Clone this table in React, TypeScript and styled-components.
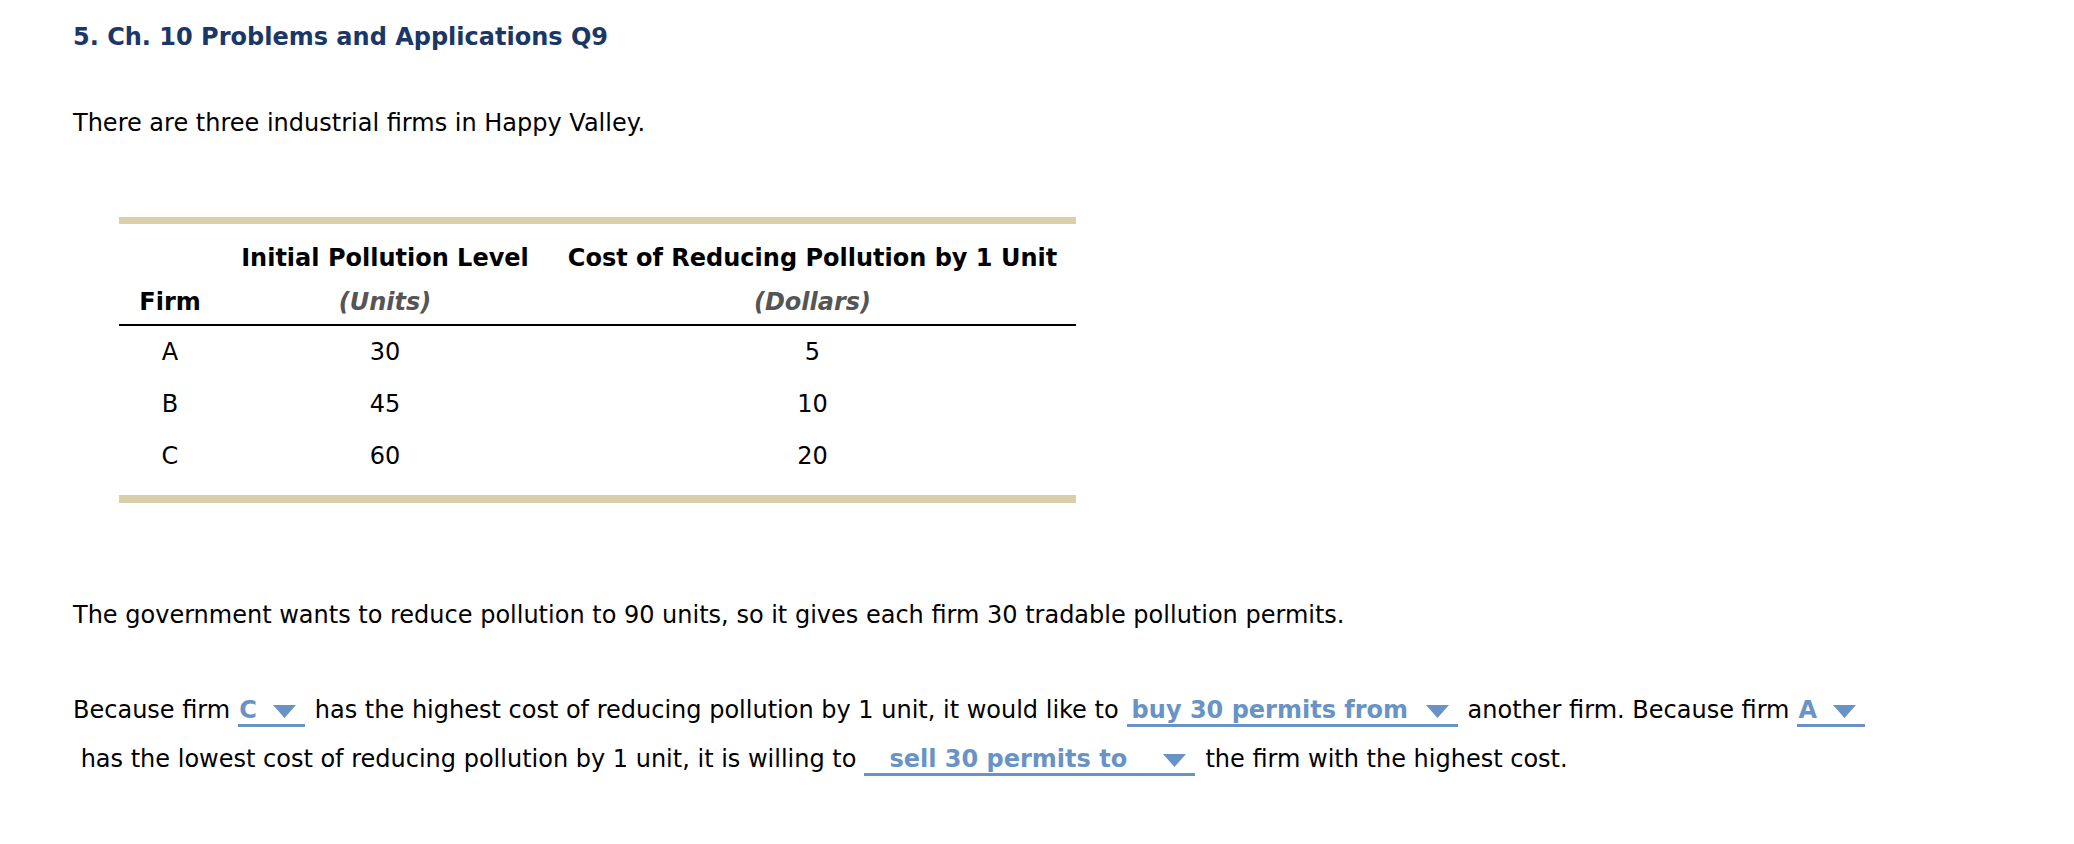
import React from 'react'
import styled, { createGlobalStyle } from 'styled-components'

const GlobalStyle = createGlobalStyle`
    html, body {
        margin: 0;
        padding: 0;
        background: #fff;
    }
    body {
        font-family: 'DejaVu Sans', Verdana, sans-serif;
        color: #000;
    }
`;

const Page = styled.main`
    padding: 23px 0 40px 73px;
    width: 2074px;
    box-sizing: border-box;
`;

const Title = styled.h2`
    margin: 0;
    font-size: 24px;
    line-height: 28px;
    font-weight: 700;
    color: #1b3765;
`;

const Paragraph = styled.p<{ $top: number; $lineHeight?: number }>`
    margin: ${p => p.$top}px 0 0;
    font-size: 24px;
    line-height: ${p => p.$lineHeight ?? 28}px;
`;

const Table = styled.table`
    margin: 80px 0 0 46px;
    width: 957px;
    border-collapse: collapse;
    border-top: 7px solid #dacfab;
    border-bottom: 8px solid #dacfab;
    font-size: 24px;
`;

const Col = styled.col<{ $width: number }>`
    width: ${p => p.$width}px;
`;

const HeadCell = styled.th<{ $pad?: number }>`
    height: 44px;
    padding: ${p => p.$pad ?? 0}px 0 0;
    font-weight: 700;
    text-align: center;
    vertical-align: middle;
    white-space: nowrap;
`;

const UnitCell = styled(HeadCell)`
    font-style: italic;
    color: #555;
`;

const RuleRow = styled.tr`
    border-bottom: 2px solid #000;
`;

const Cell = styled.td<{ $last?: boolean }>`
    height: 52px;
    padding: 0 0 ${p => (p.$last ? 13 : 0)}px;
    text-align: center;
    vertical-align: ${p => (p.$last ? 'top' : 'middle')};
    line-height: ${p => (p.$last ? '52px' : 'normal')};
`;

const Select = styled.span<{ $width?: number; $pad?: number }>`
    display: inline-flex;
    align-items: center;
    box-sizing: border-box;
    width: ${p => (p.$width ? `${p.$width}px` : 'auto')};
    margin: 0 10px 0 8px;
    padding: 0 0 1px ${p => p.$pad ?? 1}px;
    line-height: 26px;
    border-bottom: 3px solid #6993c6;
    color: #6993c6;
    font-weight: 700;
    white-space: nowrap;
    vertical-align: baseline;
    cursor: pointer;
`;

const SelectText = styled.span`
    margin-right: 16px;
`;

const Arrow = styled.svg`
    flex: 0 0 auto;
    margin: 2px 9px 0 auto;
`;

const Dropdown = ({ value, width, pad }: { value: string; width?: number; pad?: number }) => (
    <Select $width={width} $pad={pad}>
        <SelectText>{value}</SelectText>
        <Arrow width="23" height="13" viewBox="0 0 23 13">
            <polygon points="0,0 23,0 11.5,13" fill="#6993c6" />
        </Arrow>
    </Select>
);

const rows = [
    { firm: 'A', level: '30', cost: '5' },
    { firm: 'B', level: '45', cost: '10' },
    { firm: 'C', level: '60', cost: '20' },
];

const App = () => {
    return (
        <>
            <GlobalStyle />
            <Page>
                <Title>5. Ch. 10 Problems and Applications Q9</Title>
                <Paragraph $top={58}>There are three industrial firms in Happy Valley.</Paragraph>
                <Table>
                    <colgroup>
                        <Col $width={102} />
                        <Col $width={328} />
                        <Col $width={527} />
                    </colgroup>
                    <thead>
                        <tr>
                            <HeadCell $pad={12} />
                            <HeadCell $pad={12}>Initial Pollution Level</HeadCell>
                            <HeadCell $pad={12}>Cost of Reducing Pollution by 1 Unit</HeadCell>
                        </tr>
                        <RuleRow>
                            <HeadCell>Firm</HeadCell>
                            <UnitCell>(Units)</UnitCell>
                            <UnitCell>(Dollars)</UnitCell>
                        </RuleRow>
                    </thead>
                    <tbody>
                        {rows.map((r, i) => {
                            const last = i === rows.length - 1;
                            return (
                                <tr key={r.firm}>
                                    <Cell $last={last}>{r.firm}</Cell>
                                    <Cell $last={last}>{r.level}</Cell>
                                    <Cell $last={last}>{r.cost}</Cell>
                                </tr>
                            );
                        })}
                    </tbody>
                </Table>
                <Paragraph $top={98}>
                    The government wants to reduce pollution to 90 units, so it gives each firm 30 tradable pollution permits.
                </Paragraph>
                <Paragraph $top={57} $lineHeight={49}>
                    Because firm<Dropdown value="C" />has the highest cost of reducing pollution by 1 unit, it would like to
                    <Dropdown value="buy 30 permits from" width={331} pad={5} />another firm. Because firm<Dropdown value="A" />
                    <br />
                    {'\u00a0'}has the lowest cost of reducing pollution by 1 unit, it is willing to
                    <Dropdown value="sell 30 permits to" width={331} pad={25} />the firm with the highest cost.
                </Paragraph>
            </Page>
        </>
    );
};

export default App
